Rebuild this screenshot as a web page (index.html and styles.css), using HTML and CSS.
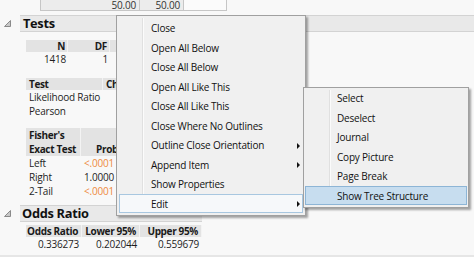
FILE: index.html
```html
<!DOCTYPE html>
<html>
<head>
<meta charset="utf-8">
<link rel="stylesheet" href="styles.css">
</head>
<body>
<div class="page">
  <div class="toprow">
    <div class="cell gray w1">50.00</div>
    <div class="cell gray w2">50.00</div>
    <div class="cell white w2"></div>
  </div>

  <div class="ohead wide">
    <span class="disc"><svg width="7" height="7" viewBox="0 0 7 7"><polygon points="6.5,0.5 6.5,6.5 0.5,6.5" fill="#c9c9c9" stroke="#8a8a8a" stroke-width="1"/></svg></span>
    <div class="otitle">Tests</div>
  </div>

  <div class="tbl t1">
    <div class="h r">N</div><div class="h r">DF</div><div class="h"></div>
    <div class="r">1418</div><div class="r">1</div><div></div>
  </div>

  <div class="tbl t2">
    <div class="h l">Test</div><div class="h l vis">ChiSquare</div>
    <div class="l">Likelihood Ratio</div><div></div>
    <div class="l">Pearson</div><div></div>
  </div>

  <div class="tbl t3">
    <div class="h l">Fisher's<br>Exact Test</div><div class="h r bot">Prob</div>
    <div class="l">Left</div><div class="l org">&lt;.0001</div>
    <div class="l">Right</div><div class="l">1.0000</div>
    <div class="l">2-Tail</div><div class="l org">&lt;.0001</div>
  </div>

  <div class="ohead narrow">
    <span class="disc"><svg width="7" height="7" viewBox="0 0 7 7"><polygon points="6.5,0.5 6.5,6.5 0.5,6.5" fill="#c9c9c9" stroke="#8a8a8a" stroke-width="1"/></svg></span>
    <div class="otitle">Odds Ratio</div>
  </div>

  <div class="tbl t4">
    <div class="h r">Odds Ratio</div><div class="h r">Lower 95%</div><div class="h r">Upper 95%</div>
    <div class="r">0.336273</div><div class="r">0.202044</div><div class="r">0.559679</div>
  </div>
</div>

<div class="menu main">
  <div class="mi">Close</div>
  <div class="mi">Open All Below</div>
  <div class="mi">Close All Below</div>
  <div class="mi">Open All Like This</div>
  <div class="mi">Close All Like This</div>
  <div class="mi">Close Where No Outlines</div>
  <div class="mi sub">Outline Close Orientation</div>
  <div class="mi sub">Append Item</div>
  <div class="mi">Show Properties</div>
  <div class="mi sub open">Edit</div>
</div>

<div class="menu submenu">
  <div class="mi">Select</div>
  <div class="mi">Deselect</div>
  <div class="mi">Journal</div>
  <div class="mi">Copy Picture</div>
  <div class="mi">Page Break</div>
  <div class="mi hot">Show Tree Structure</div>
</div>
</body>
</html>
```

FILE: styles.css
```css
* { box-sizing: border-box; }

html, body {
  margin: 0;
  padding: 0;
}

body {
  width: 474px;
  height: 257px;
  overflow: hidden;
  position: relative;
  background: #f8f8f8;
  font-family: "Open Sans", "Noto Sans", sans-serif;
  font-size: 10px;
  letter-spacing: -0.2px;
  color: #1e1e1e;
}

.page {
  height: 257px;
  border-bottom: 2px solid #e6e6e6;
}

/* top partially scrolled table row */
.toprow {
  display: flex;
  margin-left: 40px;
  height: 11px;
}
.cell {
  border-left: 1px solid #c6c6c6;
  border-bottom: 1px solid #c6c6c6;
  text-align: right;
  padding-right: 3px;
  font-size: 10px;
  line-height: 10px;
  color: #333;
}
.cell.gray { background: #ececec; }
.cell.white { background: #fbfbfb; border-right: 1px solid #c6c6c6; }
.w1 { width: 99px; }
.w2 { width: 44px; }

/* outline headers */
.ohead {
  display: flex;
  height: 17px;
}
.ohead.wide { margin-top: 4px; }
.ohead.narrow { margin-top: 7px; width: 202px; }
.disc {
  width: 20px;
  padding: 5px 0 0 4px;
  line-height: 0;
}
.otitle {
  flex: 1;
  background: #e9e9e9;
  border-top: 1px solid #d3d3d3;
  border-bottom: 1px solid #d3d3d3;
  font-weight: 700;
  font-size: 12.8px;
  letter-spacing: -0.3px;
  line-height: 15px;
  padding-left: 3px;
  color: #111;
}
.narrow .otitle { padding-left: 2px; }

/* tables */
.tbl {
  display: grid;
  margin-left: 26px;
  line-height: 14px;
}
.tbl .h {
  background: #e3e3e3;
  font-weight: 700;
  letter-spacing: -0.35px;
  line-height: 12px;
  border-right: 1px solid #f3f3f3;
  color: #1a1a1a;
  white-space: nowrap;
}
.tbl .r { text-align: right; padding-right: 2px; white-space: nowrap; }
.tbl .l { padding-left: 3px; white-space: nowrap; overflow: hidden; }
.tbl .l.vis { overflow: visible; }
.tbl .org { color: #ee8a3f; }

.t1 { margin-top: 8px; grid-template-columns: 42px 42px 40px; }
.t2 { margin-top: 12px; grid-template-columns: 77px 40px; }
.t3 { margin-top: 10px; grid-template-columns: 55px 40px; }
.t3 .h { line-height: 14px; }
.t3 .bot { display: flex; align-items: flex-end; justify-content: flex-end; }
.t4 { margin-top: 3px; grid-template-columns: 56px 58px 62px; }
.t4 .r { padding-right: 3px; }

/* context menus */
.menu {
  position: absolute;
  background: #f0f0f0;
  border: 1px solid #a0a0a0;
  box-shadow: 2px 2px 2px rgba(0, 0, 0, 0.35);
  color: #111;
}
.menu::before {
  content: "";
  position: absolute;
  left: 25px;
  top: 2px;
  bottom: 2px;
  width: 1px;
  background: #e0e0e0;
  border-right: 1px solid #fbfbfb;
}
.main {
  left: 116px;
  top: 15px;
  width: 190px;
  padding: 2px;
}
.submenu {
  left: 303px;
  top: 87px;
  width: 166px;
  padding: 0 1px 2px;
}
.mi {
  position: relative;
  height: 19.5px;
  line-height: 19.5px;
  padding-left: 31px;
  white-space: nowrap;
  border: 1px solid transparent;
}
.mi.sub::after {
  content: "";
  position: absolute;
  right: 2px;
  top: 6.5px;
  border-left: 3.5px solid #111;
  border-top: 3px solid transparent;
  border-bottom: 3px solid transparent;
}
.mi.open {
  background: #f6f8fa;
  border-color: #a8c7e0;
}
.mi.hot {
  background: #c7ddef;
  border-color: #8db5d6;
}
```
